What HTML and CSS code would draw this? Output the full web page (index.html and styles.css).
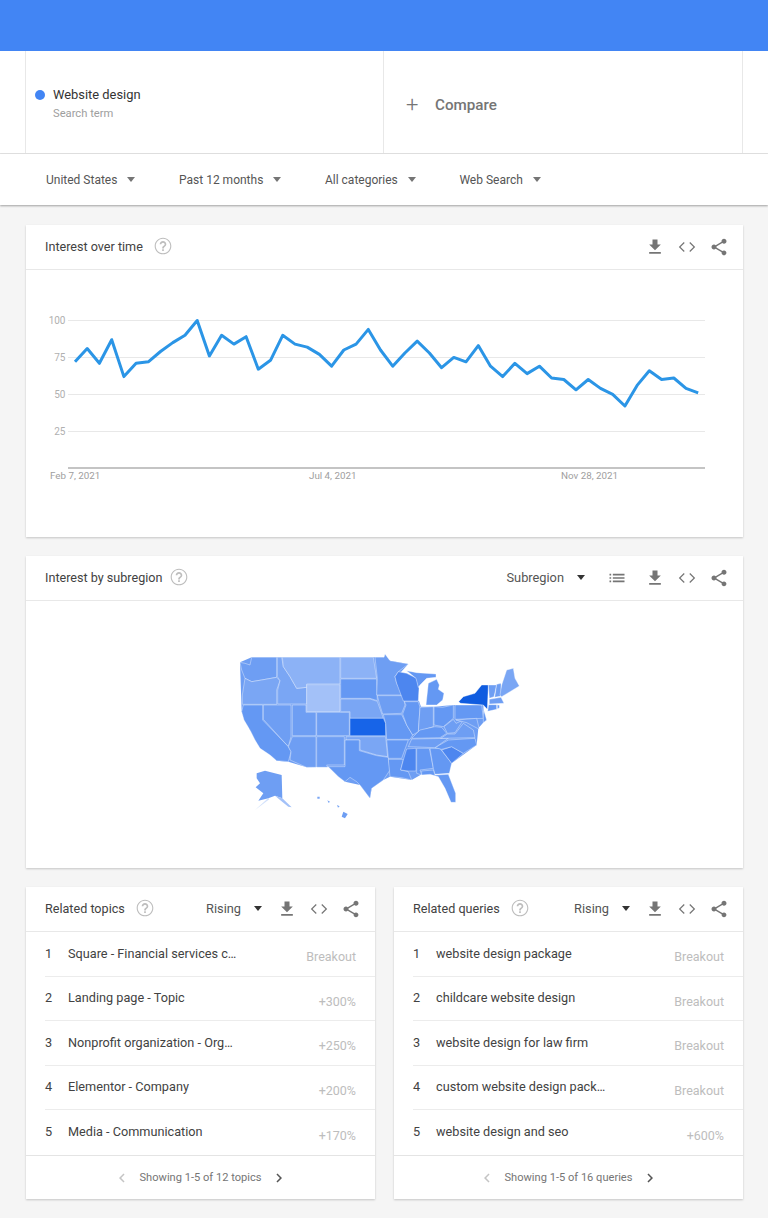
FILE: index.html
```html
<!DOCTYPE html>
<html lang="en">
<head>
<meta charset="utf-8">
<title>Google Trends - Website design</title>
<link rel="stylesheet" href="styles.css">
</head>
<body>
<svg class="defs" width="0" height="0" aria-hidden="true">
  <symbol id="i-download" viewBox="0 0 24 24"><path d="M19 9h-4V3H9v6H5l7 7 7-7zM5 18v2h14v-2H5z"/></symbol>
  <symbol id="i-code" viewBox="0 0 24 24"><path d="M9.2 16.9L4.3 12l4.9-4.9L8.2 6l-6 6 6 6 1-1.1zm5.6 0l4.9-4.9-4.9-4.9 1-1.1 6 6-6 6-1-1.1z"/></symbol>
  <symbol id="i-share" viewBox="0 0 24 24"><path d="M18 16.08c-.76 0-1.44.3-1.96.77L8.91 12.7c.05-.23.09-.46.09-.7s-.04-.47-.09-.7l7.05-4.11c.54.5 1.25.81 2.04.81 1.66 0 3-1.34 3-3s-1.34-3-3-3-3 1.34-3 3c0 .24.04.47.09.7L8.04 9.81C7.5 9.31 6.79 9 6 9c-1.66 0-3 1.34-3 3s1.34 3 3 3c.79 0 1.5-.31 2.04-.81l7.12 4.16c-.05.21-.08.43-.08.65 0 1.61 1.31 2.92 2.92 2.92 1.61 0 2.92-1.31 2.92-2.92s-1.31-2.92-2.92-2.92z"/></symbol>
  <symbol id="i-help" viewBox="0 0 24 24"><path d="M11 18h2v-2h-2v2zm1-16C6.48 2 2 6.48 2 12s4.48 10 10 10 10-4.48 10-10S17.52 2 12 2zm0 18.7c-4.8 0-8.7-3.9-8.7-8.7S7.200 3.300 12 3.300s8.700 3.900 8.700 8.700-3.900 8.700-8.700 8.700zM12 6c-2.210 0-4 1.790-4 4h2c0-1.100.900-2 2-2s2 .900 2 2c0 2-3 1.750-3 5h2c0-2.250 3-2.500 3-5 0-2.210-1.790-4-4-4z"/></symbol>
  <symbol id="i-list" viewBox="0 0 24 24"><path d="M3 13h2v-2H3v2zm0 4h2v-2H3v2zm0-8h2V7H3v2zm4 4h14v-2H7v2zm0 4h14v-2H7v2zM7 7v2h14V7H7z"/></symbol>
  <symbol id="i-prev" viewBox="0 0 24 24"><path d="M15.400 7.400L14 6l-6 6 6 6 1.400-1.400L10.800 12z"/></symbol>
  <symbol id="i-next" viewBox="0 0 24 24"><path d="M10 6L8.600 7.400 13.200 12l-4.600 4.600L10 18l6-6z"/></symbol>
</svg>

<header class="topbar"></header>

<section class="terms">
  <div class="term">
    <span class="term-dot"></span>
    <div>
      <div class="term-name">Website design</div>
      <div class="term-type">Search term</div>
    </div>
  </div>
  <div class="term term-compare">
    <span class="compare-plus">+</span>
    <span class="compare-label">Compare</span>
  </div>
</section>

<nav class="filters">
  <div class="filter"><span>United States</span><i class="caret"></i></div>
  <div class="filter"><span>Past 12 months</span><i class="caret"></i></div>
  <div class="filter"><span>All categories</span><i class="caret"></i></div>
  <div class="filter"><span>Web Search</span><i class="caret"></i></div>
</nav>

<main class="page">
  <section class="card card-time">
    <header class="card-head">
      <h2 class="card-title">Interest over time</h2>
      <svg class="help"><use href="#i-help"/></svg>
      <div class="tools">
        <svg class="tool"><use href="#i-download"/></svg>
        <svg class="tool"><use href="#i-code"/></svg>
        <svg class="tool"><use href="#i-share"/></svg>
      </div>
    </header>
    <svg class="chart" viewBox="0 0 717 267">
      <g class="grid">
        <line x1="42" y1="50.500" x2="679" y2="50.500"/>
        <line x1="42" y1="87.500" x2="679" y2="87.500"/>
        <line x1="42" y1="124.500" x2="679" y2="124.500"/>
        <line x1="42" y1="161.500" x2="679" y2="161.500"/>
      </g>
      <line class="axis" x1="42" y1="198" x2="679" y2="198"/>
      <g class="y-labels">
        <text x="39.500" y="54">100</text>
        <text x="39.500" y="91">75</text>
        <text x="39.500" y="128">50</text>
        <text x="39.500" y="165">25</text>
      </g>
      <g class="x-labels">
        <text x="24" y="209">Feb 7, 2021</text>
        <text x="283" y="209">Jul 4, 2021</text>
        <text x="535" y="209">Nov 28, 2021</text>
      </g>
      <polyline class="trend" points="49,91.800 61.200,78.500 73.400,93.300 85.700,69.700 97.900,106.600 110.100,93.300 122.300,91.800 134.500,81.500 146.800,72.600 159,65.300 171.200,50.500 183.400,85.900 195.600,65.300 207.900,74.100 220.100,66.700 232.300,99.200 244.500,90.300 256.700,65.300 269,74.100 281.200,77.100 293.400,84.400 305.600,96.200 317.800,80 330.100,74.100 342.300,59.400 354.500,80 366.700,96.200 378.900,83 391.200,71.200 403.400,83 415.600,97.700 427.800,87.400 440,91.800 452.300,75.600 464.500,96.200 476.700,106.600 488.900,93.300 501.100,103.600 513.400,96.200 525.600,108 537.800,109.500 550,119.800 562.200,109.500 574.500,118.400 586.700,124.300 598.900,136 611.100,115.400 623.300,100.700 635.600,109.500 647.800,108 660,118.400 672.200,122.800"/>
    </svg>
  </section>

  <section class="card card-region">
    <header class="card-head">
      <h2 class="card-title">Interest by subregion</h2>
      <svg class="help help-near"><use href="#i-help"/></svg>
      <div class="tools">
        <div class="select select-region"><span>Subregion</span><i class="caret caret-dark"></i></div>
        <svg class="tool tool-list"><use href="#i-list"/></svg>
        <svg class="tool"><use href="#i-download"/></svg>
        <svg class="tool"><use href="#i-code"/></svg>
        <svg class="tool"><use href="#i-share"/></svg>
      </div>
    </header>
    <div class="map-wrap">
      <svg class="map" viewBox="0 0 930 570">
        <path class="base" d="M60 67L95 52H492L510 62 565 72 530 110 550 183H597L603 200H642L700 195H790L792 245 775 265 770 315 695 370 645 403H605L575 420 510 410 490 420 455 445 450 475 420 435 375 425 325 380 260 382 205 365 170 362 90 270 65 215Z"/>
        <!-- west -->
        <path class="c3" d="M60 67L75 70 90 75 95 52H170V112L125 120 95 125 75 115 65 90Z"/>
        <path class="c4" d="M75 115L95 125 125 120 170 112 180 122 170 150V193H67V165Z"/>
        <path class="c4" d="M172 52H185L190 80 210 110 230 145 260 142V192H173V150L180 122 172 110Z"/>
        <path class="c5" d="M187 52H360V132H260V142L230 145 210 110 190 80Z"/>
        <path class="c6" d="M260 134H360V215H260Z"/>
        <path class="c3" d="M290 217H388V287H290Z"/>
        <path class="c3" d="M217 195H258V217H288V287H217Z"/>
        <path class="c3" d="M130 195H213V290L205 320 130 238Z"/>
        <path class="c2" d="M70 195H128V240L205 320 213 335 205 365 170 362 150 345 120 325 105 300 90 270 72 240 65 215Z"/>
        <path class="c3" d="M217 290H288V382H260L210 360 213 335 205 320 213 300Z"/>
        <path class="c3" d="M290 290H373V375H320L323 382H290Z"/>
        <!-- plains -->
        <path class="c5" d="M362 52H460L470 115H362Z"/>
        <path class="c2" d="M362 117H470V125L472 182 450 175H362Z"/>
        <path class="c4" d="M362 177H450L472 184 490 235H390V215H362Z"/>
        <path class="c0" d="M390 235H490L497 250V287H390Z"/>
        <path class="c4" d="M378 290H497L503 350 470 345 420 330V300H378Z"/>
        <path class="c2" d="M375 300H418V332L470 347 505 352 510 390 490 420 455 445 450 475 420 435 410 425 390 412 375 425 355 410 325 380H375Z"/>
        <!-- midwest -->
        <path class="c3" d="M465 52H492L495 42 510 62 565 72 535 95 525 110 530 130 550 165H470L472 115Z"/>
        <path class="c3" d="M472 167H550L555 195 545 220 488 222 478 190Z"/>
        <path class="c2" d="M490 224H545L560 255 578 285 570 298H500L497 250Z"/>
        <path class="c1" d="M525 110L535 95 560 100 590 115 597 145 595 183H550L530 130Z"/>
        <path class="c2" d="M553 185H595L600 202 595 275 578 285 560 255 548 222 558 195Z"/>
        <path class="c3" d="M600 202L640 200V260L595 275Z"/>
        <path class="c2" d="M642 200L668 202 700 195V235L670 260 642 255Z"/>
        <path class="c2" d="M618 195L625 130 650 118 658 135 655 148 672 160 668 180 650 195Z"/>
        <path class="c2" d="M560 92L590 98 648 102V112L620 115 600 135 595 142 588 115Z"/>
        <!-- south -->
        <path class="c2" d="M500 300H565L545 355H505Z"/>
        <path class="c2" d="M505 358H550L542 390 565 395 575 420 545 413 510 410Z"/>
        <path class="c1" d="M560 327L588 325V393H565L542 390 550 360Z"/>
        <path class="c2" d="M590 325H628L640 385 600 390 605 405 590 400Z"/>
        <path class="c2" d="M630 325H660L695 370 688 400 645 403 640 385Z"/>
        <path class="c2" d="M605 393L640 390 645 405 685 403 707 460V487H693L675 445 655 410 630 403 605 405Z"/>
        <path class="c1" d="M665 330L695 320 730 340 695 370Z"/>
        <path class="c2" d="M645 323L685 300 765 295 770 315 730 340 695 320 665 328Z"/>
        <path class="c3" d="M565 320L575 297 685 295 645 323Z"/>
        <path class="c2" d="M575 295L600 270 645 260 665 262 680 280 660 293Z"/>
        <path class="c3" d="M662 295L682 282H705L730 250 760 270 765 293Z"/>
        <path class="c3" d="M672 260L700 238 708 250 730 240 705 278 682 280Z"/>
        <!-- northeast -->
        <path class="c2" d="M705 195H785L790 235 705 238Z"/>
        <path class="c00" d="M716 185L730 170 765 160 785 135H805L802 208 790 195 722 190Z"/>
        <path class="c2" d="M792 212L800 240 790 248 790 222Z"/>
        <path class="c3" d="M708 240L770 235 778 268 740 248Z"/>
        <path class="c3" d="M805 135H830L822 170 808 175Z"/>
        <path class="c3" d="M830 133L843 130V168L824 172Z"/>
        <path class="c4" d="M860 90L880 85 885 115 898 138 870 155 845 170 840 165 845 135Z"/>
        <path class="c3" d="M808 178L843 172 852 190 808 192Z"/>
        <path class="c2" d="M806 194H830V208L803 214Z"/>
        <path class="c2" d="M832 194L838 196V204L832 206Z"/>
        <!-- alaska and hawaii -->
        <path class="c3 thin" d="M110 400L135 392 185 405 187 475 165 467 145 475 115 482 130 460 107 442 120 430 110 415Z"/>
        <path class="c6 thin" d="M165 467L187 475 215 502 205 500 180 480Z"/>
        <path class="c6 thin faint" d="M145 474L105 510 148 478Z"/>
        <path class="c3 thin" d="M370 515L383 522 375 535 365 530Z"/>
        <path class="c4 thin" d="M292 470H299V476H292ZM322 481L330 485 326 489ZM351 495L359 499 354 503Z"/>
      </svg>
    </div>
  </section>

  <div class="related">
    <section class="card card-list">
      <header class="card-head">
        <h2 class="card-title">Related topics</h2>
        <svg class="help"><use href="#i-help"/></svg>
        <div class="tools">
          <div class="select"><span>Rising</span><i class="caret caret-dark"></i></div>
          <svg class="tool"><use href="#i-download"/></svg>
          <svg class="tool"><use href="#i-code"/></svg>
          <svg class="tool"><use href="#i-share"/></svg>
        </div>
      </header>
      <ol class="rows">
        <li class="row"><span class="rank">1</span><span class="label">Square - Financial services c…</span><span class="value">Breakout</span></li>
        <li class="row"><span class="rank">2</span><span class="label">Landing page - Topic</span><span class="value">+300%</span></li>
        <li class="row"><span class="rank">3</span><span class="label">Nonprofit organization - Org…</span><span class="value">+250%</span></li>
        <li class="row"><span class="rank">4</span><span class="label">Elementor - Company</span><span class="value">+200%</span></li>
        <li class="row"><span class="rank">5</span><span class="label">Media - Communication</span><span class="value">+170%</span></li>
      </ol>
      <footer class="pager">
        <svg class="pager-icon off"><use href="#i-prev"/></svg>
        <span>Showing 1-5 of 12 topics</span>
        <svg class="pager-icon"><use href="#i-next"/></svg>
      </footer>
    </section>

    <section class="card card-list">
      <header class="card-head">
        <h2 class="card-title">Related queries</h2>
        <svg class="help"><use href="#i-help"/></svg>
        <div class="tools">
          <div class="select"><span>Rising</span><i class="caret caret-dark"></i></div>
          <svg class="tool"><use href="#i-download"/></svg>
          <svg class="tool"><use href="#i-code"/></svg>
          <svg class="tool"><use href="#i-share"/></svg>
        </div>
      </header>
      <ol class="rows">
        <li class="row"><span class="rank">1</span><span class="label">website design package</span><span class="value">Breakout</span></li>
        <li class="row"><span class="rank">2</span><span class="label">childcare website design</span><span class="value">Breakout</span></li>
        <li class="row"><span class="rank">3</span><span class="label">website design for law firm</span><span class="value">Breakout</span></li>
        <li class="row"><span class="rank">4</span><span class="label">custom website design pack…</span><span class="value">Breakout</span></li>
        <li class="row"><span class="rank">5</span><span class="label">website design and seo</span><span class="value">+600%</span></li>
      </ol>
      <footer class="pager">
        <svg class="pager-icon off"><use href="#i-prev"/></svg>
        <span>Showing 1-5 of 16 queries</span>
        <svg class="pager-icon"><use href="#i-next"/></svg>
      </footer>
    </section>
  </div>
</main>
</body>
</html>
```
FILE: styles.css
```css
* { box-sizing: border-box; }
html, body { margin: 0; padding: 0; }
body {
  background: #f5f5f5;
  font-family: Roboto, "Noto Sans", sans-serif;
  color: #424242;
  height: 1218px;
  overflow: hidden;
}
.defs { position: absolute; }

.topbar { height: 51px; background: #4285f4; }

.terms {
  height: 103px;
  display: flex;
  padding-left: 25px;
  padding-right: 25px;
  background: #fff;
  border-bottom: 1px solid #e4e4e4;
}
.term {
  flex: 0 0 358px;
  display: flex;
  align-items: center;
  padding: 4px 0 0 9px;
  border-left: 1px solid #e8e8e8;
}
.term-compare {
  flex: 1;
  padding: 6px 0 0 22px;
  border-right: 1px solid #e8e8e8;
}
.term-dot {
  width: 10px;
  height: 10px;
  margin-right: 8px;
  position: relative;
  top: -9px;
  border-radius: 50%;
  background: #4285f4;
}
.term-name { font-size: 12.9px; line-height: 18px; color: #333; }
.term-type { font-size: 11.2px; line-height: 18px; margin-top: 1px; color: #9e9e9e; }
.compare-plus { font-size: 22px; font-weight: 300; color: #757575; width: 29px; line-height: 22px; }
.compare-label { font-size: 15.2px; font-weight: 500; color: #757575; }

.filters {
  height: 51px;
  display: flex;
  align-items: center;
  gap: 43.6px;
  padding-left: 46px;
  background: #fff;
  box-shadow: 0 1px 2px rgba(0, 0, 0, .35);
  position: relative;
}
.filter { display: flex; align-items: center; gap: 10px; font-size: 12px; color: #555; }
.caret {
  width: 0;
  height: 0;
  border-left: 4.5px solid transparent;
  border-right: 4.5px solid transparent;
  border-top: 5px solid #757575;
}
.caret-dark { border-top-color: #333; }

.page { padding: 20px 25px 0 26px; }

.card {
  background: #fff;
  box-shadow: 0 1px 2px rgba(0, 0, 0, .2);
}
.card-time { height: 312px; margin-bottom: 19px; }
.card-region { height: 312px; margin-bottom: 19px; }
.card-list { height: 312px; flex: 0 0 349px; }

.card-head {
  height: 45px;
  display: flex;
  align-items: center;
  padding: 0 8px 2px 19px;
  border-bottom: 1px solid #e8e8e8;
}
.card-title { margin: 0; font-size: 12.6px; font-weight: 400; color: #424242; }
.help { width: 20px; height: 20px; margin-left: 10px; fill: #bdbdbd; }
.help-near { margin-left: 7px; }
.tools { margin-left: auto; display: flex; align-items: center; }
.tool { width: 32px; height: 20px; margin-top: 2px; fill: #757575; }
.tool-list { margin-right: 6px; }

.select { display: flex; align-items: center; gap: 13px; font-size: 12.8px; color: #555; margin-right: 9px; }
.select-region { margin-right: 16px; }

.chart { display: block; width: 717px; height: 267px; }
.grid line { stroke: #e8e8e8; stroke-width: 1; }
.axis { stroke: #c4c4c4; stroke-width: 2; }
.y-labels text { font-size: 10px; fill: #b0b0b0; text-anchor: end; font-family: Roboto, sans-serif; }
.x-labels text { font-size: 9.8px; fill: #9e9e9e; font-family: Roboto, sans-serif; }
.trend { fill: none; stroke: #2b95e6; stroke-width: 3; stroke-linejoin: round; }

.map-wrap { padding: 39px 0 0 194px; }
.map { display: block; width: 310px; height: 190px; filter: blur(.3px); }
.map path { stroke: #fff; stroke-width: 1.4; stroke-opacity: .8; stroke-linejoin: round; }
.map path.thin, .map path.base { stroke-width: 0; }
.map path.faint { opacity: .5; }
.base { fill: #6e9ef3; }
.c00 { fill: #0f5ce0; }
.c0 { fill: #1764e8; }
.c1 { fill: #4d86ef; }
.c2 { fill: #6498f3; }
.c3 { fill: #6e9ef3; }
.c4 { fill: #7aa6f4; }
.c5 { fill: #8cb2f6; }
.c6 { fill: #a3c1f8; }

.related { display: flex; gap: 19px; }

.rows { margin: 0; padding: 0; list-style: none; height: 223px; }
.row {
  height: 44.5px;
  display: flex;
  align-items: center;
  margin-left: 19px;
  padding: 0 19px .6px 0;
  border-bottom: 1px solid #ececec;
  font-size: 12.7px;
  color: #424242;
}
.row:last-child { border-bottom: 0; }
.rank { width: 23px; }
.label { flex: 1; white-space: nowrap; }
.value { position: relative; top: 3.3px; font-size: 12.5px; color: #bdbdbd; }

.pager {
  height: 44px;
  display: flex;
  align-items: center;
  justify-content: center;
  gap: 9px;
  border-top: 1px solid #e4e4e4;
  font-size: 11.1px;
  color: #757575;
}
.pager-icon { width: 18px; height: 18px; fill: #555; }
.pager-icon.off { fill: #c4c4c4; }
```
